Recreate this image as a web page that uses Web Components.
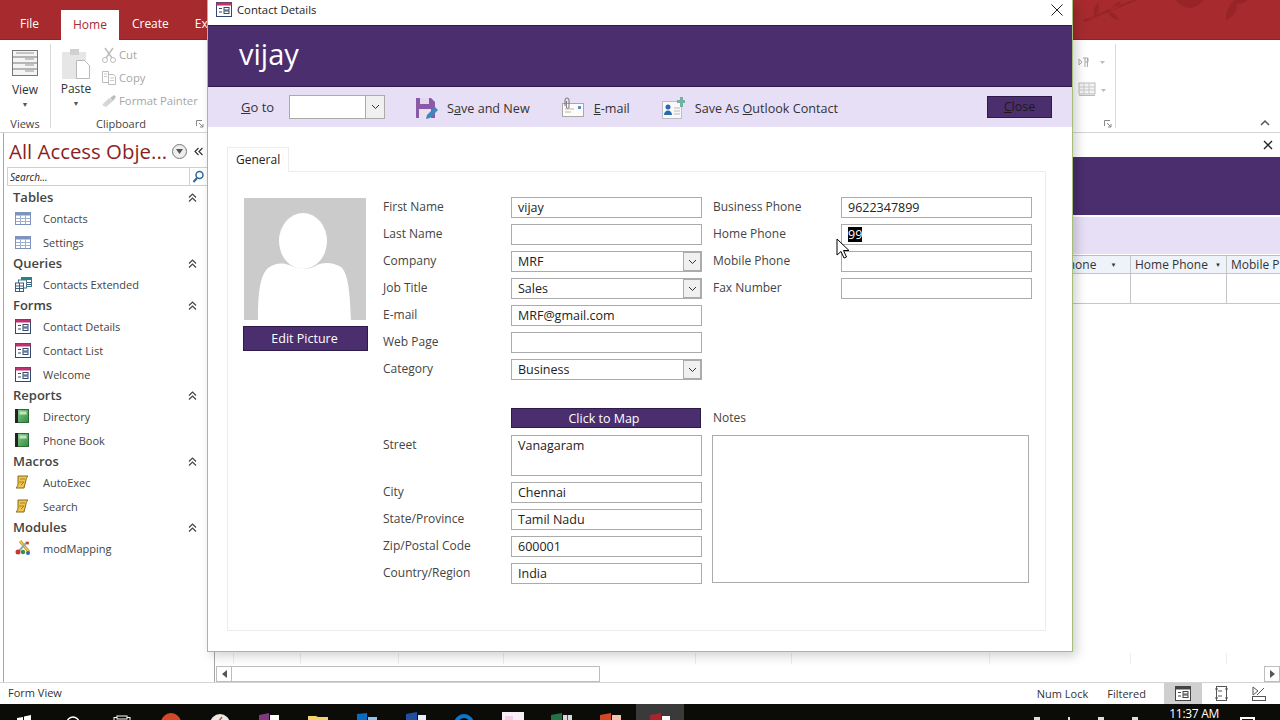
<!DOCTYPE html>
<html lang="en">
<head>
<meta charset="UTF-8">
<title>Contact Details</title>
<style>
  html, body { margin: 0; padding: 0; height: 720px; overflow: hidden; background: #fff; }
  body { font-family: 'Open Sans', 'Noto Sans', Arial, sans-serif; font-size: 12px; color: #333; }
</style>
</head>
<body>
<access-app></access-app>

<script>
// shared icon sprites, each element pulls what it needs
const ICONS = {
  form: '<svg width="16" height="15" viewBox="0 0 16 15"><rect x=".5" y=".5" width="15" height="14" fill="#fff" stroke="#2f4a6e"/><rect x=".5" y=".5" width="15" height="3" fill="#c2306e"/><path d="M3 6.500h3M3 10h3" stroke="#2f4a6e"/><rect x="8" y="5.500" width="5" height="2.500" fill="#fff" stroke="#2f4a6e"/><rect x="8" y="9" width="5" height="2.500" fill="#fff" stroke="#2f4a6e"/></svg>',
  table: '<svg width="16" height="13" viewBox="0 0 16 13"><rect x=".5" y=".5" width="15" height="12" fill="#fff" stroke="#7d93bd"/><rect x=".5" y=".5" width="15" height="3" fill="#7d93bd"/><path d="M1 6.500h14M1 9.500h14M5.500 3v9M10.500 3v9" stroke="#9db0d2"/></svg>',
  query: '<svg width="17" height="15" viewBox="0 0 17 15"><rect x="6.500" y=".5" width="10" height="9" fill="#fff" stroke="#2f7f86"/><rect x="6.500" y=".5" width="10" height="2.500" fill="#2f7f86"/><rect x="3.500" y="3" width="8" height="8" fill="#fff" stroke="#49708c"/><rect x=".5" y="6" width="8" height="8.500" fill="#fff" stroke="#3b5d84"/><path d="M1 9h7M1 11.500h7M4.500 6v8M12 5.500h4M12 7.500h4" stroke="#3b5d84"/></svg>',
  report: '<svg width="14" height="14" viewBox="0 0 14 14"><defs><linearGradient id="r" x1="0" y1="0" x2="1" y2="1"><stop offset="0" stop-color="#8fd08f"/><stop offset="1" stop-color="#2e8b3e"/></linearGradient></defs><rect x="1.500" y=".5" width="12" height="13" fill="url(#r)" stroke="#2f6b36"/><rect x="0" y="0" width="3" height="14" fill="#222"/><rect x="4.500" y="2.500" width="7" height="3" fill="#bfe6bf"/></svg>',
  macro: '<svg width="14" height="14" viewBox="0 0 14 14"><path d="M3 1h10c-1 1-1.500 2-2 4L9 13H1c1-1 1.500-2 2-4z" fill="#eec44e" stroke="#8a6a1c"/><path d="M5 4h5M4 7h5l-3 3" stroke="#a88322" fill="none"/></svg>',
  module: '<svg width="17" height="16" viewBox="0 0 17 16"><path d="M5 1l9 11" stroke="#c9a227" stroke-width="3"/><path d="M5 1l9 11" stroke="#f3e08a"/><path d="M12 2l-8 9" stroke="#9aa7b8" stroke-width="2"/><circle cx="3" cy="12" r="2.500" fill="#c43b2e"/><circle cx="8" cy="12" r="2.200" fill="#3c8f3e"/><circle cx="13" cy="13" r="2" fill="#3566b0"/><circle cx="12.500" cy="3" r="1.500" fill="#c43b2e"/></svg>',
  caret: '<svg width="9" height="6" viewBox="0 0 9 6"><path d="M1 1l3.500 3.500L8 1" fill="none" stroke="#333"/></svg>',
  chevrons: '<svg width="9" height="9" viewBox="0 0 9 9"><path d="M1 4.500L4.500 1 8 4.500M1 8.500L4.500 5 8 8.500" fill="none" stroke="#444" stroke-width="1.200"/></svg>'
};

class NavGroup extends HTMLElement {
  constructor() {
    super();
    this.attachShadow({mode: 'open'}).innerHTML = `
      <style>
        :host { display: block; }
        .head { display: flex; justify-content: space-between; align-items: center; height: 18px; padding: 0 13px 0 9px; font-size: 13px; font-weight: 600; color: #444; }
      </style>
      <div class="head"><span>${this.getAttribute('label')}</span>${ICONS.chevrons}</div>
      <slot></slot>`;
  }
}
customElements.define('nav-group', NavGroup);

class NavItem extends HTMLElement {
  constructor() {
    super();
    this.attachShadow({mode: 'open'}).innerHTML = `
      <style>
        :host { display: flex; align-items: center; height: 24px; font-size: 11px; color: #444; }
        .ic { width: 39px; padding-left: 11px; box-sizing: border-box; display: flex; align-items: center; }
      </style>
      <span class="ic">${ICONS[this.getAttribute('icon')]}</span><slot></slot>`;
  }
}
customElements.define('nav-item', NavItem);

class NavPane extends HTMLElement {
  constructor() {
    super();
    this.attachShadow({mode: 'open'}).innerHTML = `
      <style>
        :host { display: flex; flex-direction: column; width: 207px; margin-left: 3px; border-left: 1px solid #a6a6a6; box-sizing: border-box; background: #fff; }
        .title { display: flex; align-items: center; height: 34px; padding: 2px 7px 0 5px; box-sizing: border-box; }
        .title span { flex: 1; font-size: 20.400px; color: #8a1f24; white-space: nowrap; }
        .circle { width: 13px; height: 13px; border: 1px solid #777; border-radius: 50%; background: #eee; display: flex; align-items: center; justify-content: center; margin-right: 7px; }
        .search { display: flex; align-items: center; height: 17px; margin: 0 3px 0 3px; border: 1px solid #d0d0d0; border-width: 1px 0 1px 1px; font-size: 10px; font-style: italic; color: #222; padding-left: 2px; }
        .search span { flex: 1; }
        .lens { width: 17px; border-left: 1px solid #d0d0d0; height: 100%; display: flex; align-items: center; justify-content: center; }
        .list { padding-top: 2px; }
      </style>
      <div class="title"><span>All Access Obje...</span>
        <div class="circle"><svg width="7" height="5" viewBox="0 0 7 5"><path d="M0 0h7L3.500 5z" fill="#555"/></svg></div>
        <svg width="9" height="9" viewBox="0 0 9 9"><path d="M4.500 1L1 4.500 4.500 8M8.500 1L5 4.500 8.500 8" fill="none" stroke="#333" stroke-width="1.200"/></svg>
      </div>
      <div class="search"><span>Search...</span><div class="lens"><svg width="13" height="13" viewBox="0 0 13 13"><circle cx="7.500" cy="5" r="3.500" fill="none" stroke="#2c6a9e" stroke-width="1.500"/><path d="M5 8l-3.500 4" stroke="#2c6a9e" stroke-width="2"/></svg></div></div>
      <div class="list"><slot></slot></div>`;
  }
}
customElements.define('nav-pane', NavPane);

class RibbonBar extends HTMLElement {
  constructor() {
    super();
    this.attachShadow({mode: 'open'}).innerHTML = `
      <style>
        :host { display: block; height: 133px; box-sizing: border-box; border-bottom: 1px solid #d4d4d4; background: #fff; }
        .tabs { position: relative; display: flex; align-items: flex-end; height: 40px; background: #a72b2e; border-bottom: 1px solid #8e2427; box-sizing: border-box; padding-left: 10px; color: #fff; font-size: 12px; }
        .tab { height: 30px; line-height: 30px; padding: 0 10px; margin-right: 4px; white-space: nowrap; }
        .tab.on { background: #fff; color: #a72b2e; padding: 0 12px; margin: 0 3px 0 8px; margin-bottom: -1px; }
        .tab.cut { width: 14px; padding-right: 0; overflow: hidden; margin-left: 2px; }
        .leaves { position: absolute; right: 0; top: 0; }
        .body { display: flex; height: 92px; color: #444; font-size: 12px; }
        .grp { position: relative; display: flex; flex-direction: column; box-sizing: border-box; border-right: 1px solid #d9d9d9; height: 84px; margin-top: 4px; }
        .cap { position: absolute; bottom: -3px; left: 0; right: 0; text-align: center; font-size: 11px; color: #444; }
        .big { display: flex; flex-direction: column; align-items: center; font-size: 12px; color: #333; }
        .drop { font-size: 7px; color: #555; line-height: 10px; margin-top: 2px; }
        .small { display: flex; align-items: center; gap: 2px; height: 23px; color: #a6a6a6; font-size: 11.300px; white-space: nowrap; }
        .launcher { position: absolute; right: 3px; bottom: 0; }
      </style>
      <div class="tabs">
        <div class="tab">File</div><div class="tab on">Home</div><div class="tab">Create</div><div class="tab cut">External Data</div>
        <svg class="leaves" width="206" height="36" viewBox="0 0 206 36" fill="#962327">
          <path d="M11 22C24 16 44 8 64 0H60C42 5 24 14 10 21zM20 17c-1-5 0-10 4-14 2 5 1 10-4 14zM36 10c2-4 6-7 11-9-1 5-5 8-11 9zM34 12c5 0 9 3 11 8-5 0-9-3-11-8zM18 18c-4-1-7 0-9 3 4 1 7 0 9-3z" opacity=".9"/>
          <path d="M101 0c3 4 8 7 15 8 4 0 9-2 13-8z" opacity=".85"/>
          <path d="M152 20c-1-7 3-15 8-20h14c-2 2-6 4-11 4 1 6-4 14-11 16z" opacity=".85"/>
        </svg>
      </div>
      <div class="body">
        <div class="grp" style="width:51px">
          <div class="big" style="padding-top:4px">
            <svg width="30" height="30" viewBox="0 0 30 30"><rect x="2.500" y="2.500" width="25" height="25" fill="#f4f4f4" stroke="#777"/><path d="M3 9h24M3 15h24M3 21h24" stroke="#777"/><path d="M15 11h9M15 17h9M6 5h18M15 23h9" stroke="#c5c5c5" stroke-width="2"/></svg>
            <span style="margin-top:3px">View</span><span class="drop">&#9660;</span>
          </div>
          <div class="cap">Views</div>
        </div>
        <div class="grp" style="width:157px">
          <div style="display:flex">
            <div class="big" style="width:50px;padding-top:4px">
              <svg width="30" height="32" viewBox="0 0 30 32"><rect x="1" y="4" width="24" height="27" fill="#e6e6e6"/><rect x="9" y="1" width="9" height="6" fill="#d0d0d0"/><path d="M15.500 12.500h8l5 5v13h-13z" fill="#fff" stroke="#b9b9b9"/></svg>
              <span>Paste</span><span class="drop">&#9660;</span>
            </div>
            <div style="margin-top:-1px">
              <div class="small"><svg width="16" height="16" viewBox="0 0 16 16"><path d="M4 1l7 10M12 1L5 11" stroke="#bdbdbd" stroke-width="1.500"/><circle cx="4" cy="13" r="2.500" fill="none" stroke="#bdbdbd"/><circle cx="12" cy="13" r="2.500" fill="none" stroke="#bdbdbd"/></svg>Cut</div>
              <div class="small"><svg width="16" height="15" viewBox="0 0 16 15"><path d="M1.500 1.500h6v11h-6zM7.500 4.500h5l2 2v8h-7z" fill="#fff" stroke="#bdbdbd"/><path d="M3 4h3M3 6.500h3M9 8h4M9 10.500h4" stroke="#ccc"/></svg>Copy</div>
              <div class="small"><svg width="16" height="15" viewBox="0 0 16 15"><path d="M1 12l7-7 4 3-7 6z" fill="#d6d6d6"/><path d="M9 5l4-3 2 2-3 4z" fill="#bdbdbd"/></svg>Format Painter</div>
            </div>
          </div>
          <div class="cap" style="padding-right:16px">Clipboard</div>
          <svg class="launcher" width="8" height="8" viewBox="0 0 8 8"><path d="M.5 6V.5H6M3 3l4 4M7 4v3H4" fill="none" stroke="#888"/></svg>
        </div>
        <div style="margin-left:867px;display:flex;position:relative;width:40px;border-right:1px solid #d9d9d9;height:84px;margin-top:4px;flex:none">
          <svg style="position:absolute;left:3px;top:12px" width="30" height="40" viewBox="0 0 30 40"><path d="M1 3l3 3-3 3zM7 2v9M9.500 2v9M5 2h5v4H7" fill="none" stroke="#a8a8a8"/><path d="M22 5h5l-2.500 3z" fill="#bbb"/><rect x="1" y="27" width="16" height="11" fill="#f4f4f4" stroke="#bbb"/><path d="M1 31h16M1 34h16M6 27v11M11 27v11" stroke="#c8c8c8"/><rect x="1" y="39" width="16" height="1" fill="#bbb"/><path d="M23 33h5l-2.500 3z" fill="#bbb"/></svg>
          <svg class="launcher" style="right:3px;bottom:0" width="8" height="8" viewBox="0 0 8 8"><path d="M.5 6V.5H6M3 3l4 4M7 4v3H4" fill="none" stroke="#888"/></svg>
        </div>
        <svg style="margin-left:auto;margin-right:10px;margin-top:79px" width="10" height="7" viewBox="0 0 10 7"><path d="M1 6l4-4 4 4" fill="none" stroke="#555" stroke-width="1.500"/></svg>
      </div>`;
  }
}
customElements.define('ribbon-bar', RibbonBar);

// the datasheet that sits behind the popup form
class DocArea extends HTMLElement {
  constructor() {
    super();
    const empty = '<div></div>'.repeat(10);
    this.attachShadow({mode: 'open'}).innerHTML = `
      <style>
        :host { position: relative; display: flex; flex-direction: column; flex: 1; min-width: 0; background: #fff; overflow: hidden; }
        .top { display: flex; justify-content: flex-end; align-items: center; height: 24px; padding-right: 7px; }
        .band { height: 58px; background: #4b2e6e; }
        .sub { height: 37px; margin-top: 2px; background: #e7dff6; }
        .cols { display: grid; grid-template-columns: 19px 67px 98px 105px 192px 96px 198px 141px 96px 60px; font-size: 12px; color: #333; }
        .cols div { box-sizing: border-box; border-right: 1px solid #c6c6c6; }
        .cols div:last-child { border-right: 0; }
        .hdr { height: 19px; margin-top: 1px; border-top: 1px solid #b5bfcf; border-bottom: 1px solid #c6c6c6; background: #eef3fa; box-sizing: border-box; }
        .hdr div { height: 17px; white-space: nowrap; overflow: hidden; display: flex; align-items: center; padding-left: 4px; gap: 7px; }
        .hdr i { font-style: normal; font-size: 6px; color: #333; }
        .row { height: 30px; border-bottom: 1px solid #c6c6c6; box-sizing: border-box; }
        .stub { height: 11px; margin-top: 349px; }
        .stub div { border-color: #ededed; }
        .scroll { display: flex; height: 16px; margin-top: 2px; padding-left: 1px; }
        .sb { box-sizing: border-box; width: 16px; height: 16px; border: 1px solid #bdbdbd; display: flex; align-items: center; justify-content: center; background: #fff; }
        .track { box-sizing: border-box; width: 368px; height: 16px; border: 1px solid #bdbdbd; border-left: 0; }
      </style>
      <div class="top"><svg width="10" height="10" viewBox="0 0 10 10"><path d="M1 1l8 8M9 1L1 9" stroke="#222" stroke-width="1.400"/></svg></div>
      <div class="band"></div>
      <div class="sub"></div>
      <div class="cols hdr"><div></div><div></div><div></div><div></div><div></div><div></div><div></div><div style="padding-left:18px;gap:14px">Business Phone <i>&#9660;</i></div><div>Home Phone <i>&#9660;</i></div><div>Mobile Phone</div></div>
      <div class="cols row">${empty}</div>
      <div class="cols stub">${empty}</div>
      <div class="scroll">
        <div class="sb"><svg width="5" height="8" viewBox="0 0 5 8"><path d="M5 0v8L0 4z" fill="#555"/></svg></div>
        <div class="track"></div>
        <div class="sb" style="margin-left:auto"><svg width="5" height="8" viewBox="0 0 5 8"><path d="M0 0v8l5-4z" fill="#555"/></svg></div>
      </div>`;
  }
}
customElements.define('doc-area', DocArea);

class FormField extends HTMLElement {
  constructor() {
    super();
    const tall = this.hasAttribute('tall');
    this.attachShadow({mode: 'open'}).innerHTML = `
      <style>
        :host { display: flex; position: relative; box-sizing: border-box; height: ${tall ? 41 : 21}px; border: 1px solid #ababab; background: #fff; font-size: 12.500px; color: #222; }
        .v { flex: 1; padding: ${tall ? 1 : 0}px 0 0 6px; line-height: ${tall ? 17 : 20}px; white-space: nowrap; }
        .btn { box-sizing: border-box; width: 19px; height: 21px; margin: -1px -1px -1px 0; background: #f0f0f0; border: 2px solid #ababab; border-left-width: 1px; display: flex; align-items: center; justify-content: center; }
      </style>
      <div class="v"><slot></slot></div>
      ${this.hasAttribute('combo') ? `<div class="btn">${ICONS.caret}</div>` : ''}`;
  }
}
customElements.define('form-field', FormField);

class FormLabel extends HTMLElement {
  constructor() {
    super();
    this.attachShadow({mode: 'open'}).innerHTML = `
      <style>:host { display: block; font-size: 12px; color: #444; line-height: 20px; white-space: nowrap; }</style><slot></slot>`;
  }
}
customElements.define('form-label', FormLabel);

class PurpleButton extends HTMLElement {
  constructor() {
    super();
    this.attachShadow({mode: 'open'}).innerHTML = `
      <style>:host { display: flex; align-items: center; justify-content: center; box-sizing: border-box; background: #4b2e6e; border: 1px solid #2f1a4c; color: #fff; font-size: 12.500px; white-space: nowrap; }</style><slot></slot>`;
  }
}
customElements.define('purple-button', PurpleButton);

class ContactDialog extends HTMLElement {
  constructor() {
    super();
    this.attachShadow({mode: 'open'}).innerHTML = `
      <style>
        :host { position: absolute; left: 207px; top: 0; width: 866px; height: 652px; box-sizing: border-box; display: flex; flex-direction: column; background: #fff; border: 1px solid #a5bd7d; border-top: 0; box-shadow: 4px 4px 10px rgba(0,0,0,.18); }
        u { text-decoration: underline; text-underline-offset: 1px; }
        .cap { display: flex; align-items: center; height: 25px; box-sizing: border-box; padding: 0 9px 6px 8px; flex: none; gap: 5px; font-size: 11.300px; color: #222; }
        .cap span { flex: 1; }
        .hero { flex: none; box-sizing: border-box; height: 62px; background: #4b2e6e; border: solid #2f1a4c; border-width: 1px 0; color: #fff; font-size: 29px; line-height: 56px; padding-left: 31px; }
        .tools { flex: none; display: flex; align-items: center; height: 40px; background: #e7dff6; font-size: 12.600px; color: #333; padding-left: 33px; }
        .goto { font-size: 13px; }
        .combo { display: flex; width: 96px; height: 24px; box-sizing: border-box; border: 1px solid #ababab; background: #fff; margin: 0 12px 0 15px; }
        .combo b { margin-left: auto; width: 18px; background: #f0f0f0; border-left: 1px solid #ababab; display: flex; align-items: center; justify-content: center; }
        .tool { display: flex; align-items: center; white-space: nowrap; padding-top: 2px; }
        .close { margin-left: auto; margin-right: 20px; margin-top: -1px; width: 65px; height: 22px; color: #1b1b1b; }
        .page { flex: 1; padding: 20px 26px 20px 19px; display: flex; flex-direction: column; min-height: 0; }
        .tab { align-self: flex-start; box-sizing: border-box; height: 25px; line-height: 23px; padding: 0 8px; border: 1px solid #ececec; border-bottom: 0; font-size: 12px; color: #222; background: #fff; position: relative; z-index: 1; margin-bottom: -1px; }
        .panel { flex: 1; box-sizing: border-box; border: 1px solid #ececec; display: flex; padding: 25px 0 0 15px; }
        .photo { width: 125px; margin-right: 15px; flex: none; }
        .pic { display: block; margin: 1px 0 0 1px; }
        .edit { display: flex; height: 25px; margin-top: 6px; padding-right: 2px; }
        .upper { display: grid; grid-template-columns: 128px 191px 139px 191px; grid-auto-rows: 21px; row-gap: 6px; }
        .upper .r { margin-left: 11px; }
        .lower { display: grid; grid-template-columns: 128px 191px 328px; grid-template-rows: 21px 41px 21px 21px 21px 21px; row-gap: 6px; margin-top: 28px; }
        .map { height: 20px; margin-right: 1px; padding-right: 4px; }
        .notes { grid-column: 3; grid-row: 2 / 7; margin-left: 10px; border: 1px solid #ababab; height: 148px; width: 317px; box-sizing: border-box; }
        .sel { display: inline-block; background: #000; color: #fff; line-height: 15px; }
        .pointer { position: absolute; left: 628px; top: 238px; }
      </style>
      <div class="cap">${ICONS.form}<span>Contact Details</span>
        <svg width="12" height="12" viewBox="0 0 12 12"><path d="M.5.5l11 11M11.500.5l-11 11" stroke="#222"/></svg></div>
      <div class="hero">vijay</div>
      <div class="tools">
        <span class="goto"><u>G</u>o to</span>
        <div class="combo"><b>${ICONS.caret}</b></div>
        <div class="tool" style="margin-left:18px;gap:9px">
          <svg width="23" height="23" viewBox="0 0 23 23"><path d="M1 1h15l4 4v16H1z" fill="#8a5aa8"/><rect x="5" y="1" width="9" height="6" fill="#e4d8ee"/><rect x="4" y="12" width="12" height="9" fill="#e8e0ee"/><path d="M11 22l1-4 8-8 3 3-8 8z" fill="#3d87bf"/></svg>
          <span>S<u>a</u>ve and New</span></div>
        <div class="tool" style="margin-left:32px;gap:8px">
          <svg width="24" height="22" viewBox="0 0 24 22"><rect x=".5" y="6.500" width="21" height="13" fill="#fdfcf6" stroke="#a8a8a8"/><path d="M3 12h9M3 15h6" stroke="#b5b5b5"/><rect x="16" y="9" width="3" height="3" fill="#5b8cc8"/><path d="M3 9V3a2 2 0 014 0v7a1.300 1.300 0 01-2.600 0V4" fill="none" stroke="#777"/></svg>
          <span><u>E</u>-mail</span></div>
        <div class="tool" style="margin-left:32px;gap:10px">
          <svg width="23" height="23" viewBox="0 0 23 23"><rect x=".5" y="4.500" width="19" height="17" fill="#f8f8fb" stroke="#bcbcc8"/><circle cx="6" cy="10" r="2.500" fill="#2a6aa6"/><path d="M2 18c0-6 8-6 8 0z" fill="#2a6aa6"/><path d="M12 11h6M12 14h6M12 17h6" stroke="#bbb"/><path d="M15 3h3V0h3v3h2v3h-2v4h-3V6h-3z" fill="#74b0a0"/></svg>
          <span>Save As <u>O</u>utlook Contact</span></div>
        <purple-button class="close"><span><u>C</u>lose</span></purple-button>
      </div>
      <div class="page">
        <div class="tab">General</div>
        <div class="panel">
          <div class="photo">
            <svg class="pic" width="122" height="122" viewBox="0 0 122 122"><rect width="122" height="122" fill="#cbcbcb"/><ellipse cx="59" cy="43" rx="24" ry="28" fill="#fff"/><path d="M14 122c0-22 1-44 10-52 8-6 16-5 21-3 9 4 19 6 28 0 6-3 16-3 24 2 8 7 9 30 10 53z" fill="#fff"/></svg>
            <purple-button class="edit">Edit Picture</purple-button>
          </div>
          <div>
            <div class="upper">
              <form-label>First Name</form-label><form-field>vijay</form-field><form-label class="r">Business Phone</form-label><form-field>9622347899</form-field>
              <form-label>Last Name</form-label><form-field></form-field><form-label class="r">Home Phone</form-label><form-field><span class="sel">99</span></form-field>
              <form-label>Company</form-label><form-field combo>MRF</form-field><form-label class="r">Mobile Phone</form-label><form-field></form-field>
              <form-label>Job Title</form-label><form-field combo>Sales</form-field><form-label class="r">Fax Number</form-label><form-field></form-field>
              <form-label>E-mail</form-label><form-field>MRF@gmail.com</form-field><span></span><span></span>
              <form-label>Web Page</form-label><form-field></form-field><span></span><span></span>
              <form-label>Category</form-label><form-field combo>Business</form-field><span></span><span></span>
            </div>
            <div class="lower">
              <span></span><purple-button class="map">Click to Map</purple-button><form-label style="margin-left:11px">Notes</form-label>
              <form-label>Street</form-label><form-field tall>Vanagaram</form-field><div class="notes"></div>
              <form-label>City</form-label><form-field>Chennai</form-field>
              <form-label>State/Province</form-label><form-field>Tamil Nadu</form-field>
              <form-label>Zip/Postal Code</form-label><form-field>600001</form-field>
              <form-label>Country/Region</form-label><form-field>India</form-field>
            </div>
          </div>
        </div>
      </div>
      <svg class="pointer" width="14" height="21" viewBox="0 0 14 21"><path d="M1 1v16l4-3.500 3 6.500 2.500-1-3-6.500h5.500z" fill="#fff" stroke="#000"/></svg>`;
  }
}
customElements.define('contact-dialog', ContactDialog);

class StatusBar extends HTMLElement {
  constructor() {
    super();
    this.attachShadow({mode: 'open'}).innerHTML = `
      <style>
        :host { display: flex; align-items: center; height: 22px; box-sizing: border-box; border-top: 1px solid #d4d4d4; background: #fff; font-size: 11px; color: #333; padding-left: 8px; flex: none; }
        .txt { margin-right: 19px; }
        .v { width: 38px; height: 21px; display: flex; align-items: center; justify-content: center; }
        .v.on { background: #cfcfcf; }
      </style>
      <span style="flex:1;margin-top:-2px">Form View</span>
      <span class="txt">Num Lock</span><span class="txt" style="margin-right:18px">Filtered</span>
      <div class="v on">${ICONS.form.replace('#c2306e', '#444').replace(/#2f4a6e/g, '#444')}</div>
      <div class="v"><svg width="13" height="15" viewBox="0 0 13 15"><rect x="1.500" y=".5" width="10" height="14" fill="none" stroke="#555"/><path d="M3 5h4M3 10h4M0 3h3M10 3h3M0 12h3M10 12h3" stroke="#555"/></svg></div>
      <div class="v" style="margin-right:2px"><svg width="14" height="15" viewBox="0 0 14 15"><path d="M1 1l5 4-5 4zM5 9l7-7" fill="none" stroke="#555"/><rect x=".5" y="10.500" width="13" height="4" fill="none" stroke="#555"/></svg></div>`;
  }
}
customElements.define('status-bar', StatusBar);

class TaskBar extends HTMLElement {
  constructor() {
    super();
    // icons are cut off by the bottom of the window, only their top shows
    const glyphs = [
      '<path d="M5 14l6-1v3H5zM12 12.500l7-1.500v5h-7z" fill="#fff"/>',
      '<circle cx="12" cy="19" r="6" fill="none" stroke="#fff" stroke-width="1.500"/>',
      '<rect x="4" y="13.500" width="16" height="6" fill="none" stroke="#fff"/><rect x="7" y="12" width="10" height="3" fill="#0b0b08" stroke="#fff"/>',
      '<circle cx="12" cy="19" r="10" fill="#d4482a"/>',
      '<circle cx="12" cy="20" r="10" fill="#ece8e4"/><path d="M14 13l-3 4" stroke="#b54" stroke-width="1.500"/>',
      '<path d="M2 11l10-2v7H2z" fill="#80397b"/><rect x="13" y="11" width="9" height="5" fill="#fff"/>',
      '<path d="M2 12h8l2 1h10v3H2z" fill="#f0d36a"/>',
      '<path d="M2 10l10-1v7H2z" fill="#0a6cc0"/><rect x="13" y="13" width="9" height="3" fill="#8cc4ee"/>',
      '<path d="M2 10l11-2v8H2z" fill="#1f4f9e"/><rect x="14" y="11" width="8" height="5" fill="#e8eef8"/>',
      '<circle cx="12" cy="20" r="8" fill="none" stroke="#0a78d0" stroke-width="4"/>',
      '<rect x="1" y="8" width="22" height="8" fill="#f7eef6"/><rect x="4" y="12" width="8" height="4" fill="#f0cfe8"/>',
      '<path d="M1 11l11-2v7H1z" fill="#217346"/><rect x="13" y="11" width="9" height="5" fill="#fff" fill-opacity=".85"/><path d="M17.500 11v5" stroke="#217346"/>',
      '<path d="M1 11l11-2v7H1z" fill="#d24726"/><rect x="13" y="11" width="9" height="5" fill="#f3c3b4"/>',
      '<path d="M2 11l11-2v7H2z" fill="#a4262c"/><rect x="14" y="12" width="8" height="4" fill="#fff"/>'
    ];
    const icons = glyphs.map((g, i) => `<div class="t${i === 13 ? ' on' : ''}"><svg width="24" height="16" viewBox="0 0 24 16">${g}</svg></div>`).join('');
    this.attachShadow({mode: 'open'}).innerHTML = `
      <style>
        :host { display: flex; height: 16px; flex: none; background: #0b0b08; color: #fff; overflow: hidden; }
        .t { width: 48.900px; height: 16px; display: flex; justify-content: center; flex: none; }
        .t.on { background: #3a3a3a; }
        .clock { margin-left: auto; margin-right: 21px; font-size: 12px; line-height: 12px; letter-spacing: -.3px; padding-top: 4px; }
        .note { width: 15px; height: 12px; box-sizing: border-box; margin: 13px 25px 0 0; border: 2px solid #fff; }
        .tray { display: flex; gap: 28px; margin-left: 350px; padding-top: 13px; }
        .tray i { width: 6px; height: 3px; background: #ddd; display: block; }
      </style>
      ${icons}
      <div class="tray"><i></i><i style="width:2px"></i><i></i><i></i></div>
      <div class="clock">11:37 AM</div>
      <div class="note"></div>`;
  }
}
customElements.define('task-bar', TaskBar);

class AccessApp extends HTMLElement {
  constructor() {
    super();
    this.attachShadow({mode: 'open'}).innerHTML = `
      <style>
        :host { position: relative; display: flex; flex-direction: column; width: 1280px; height: 720px; overflow: hidden; }
        .main { display: flex; height: 549px; flex: none; }
        .split { width: 4px; flex: none; border-right: 1px solid #a6a6a6; background: #fff; }
      </style>
      <ribbon-bar></ribbon-bar>
      <div class="main">
        <nav-pane>
          <nav-group label="Tables"><nav-item icon="table">Contacts</nav-item><nav-item icon="table">Settings</nav-item></nav-group>
          <nav-group label="Queries"><nav-item icon="query">Contacts Extended</nav-item></nav-group>
          <nav-group label="Forms"><nav-item icon="form">Contact Details</nav-item><nav-item icon="form">Contact List</nav-item><nav-item icon="form">Welcome</nav-item></nav-group>
          <nav-group label="Reports"><nav-item icon="report">Directory</nav-item><nav-item icon="report">Phone Book</nav-item></nav-group>
          <nav-group label="Macros"><nav-item icon="macro">AutoExec</nav-item><nav-item icon="macro">Search</nav-item></nav-group>
          <nav-group label="Modules"><nav-item icon="module">modMapping</nav-item></nav-group>
        </nav-pane>
        <div class="split"></div>
        <doc-area></doc-area>
      </div>
      <status-bar></status-bar>
      <task-bar></task-bar>
      <contact-dialog></contact-dialog>`;
  }
}
customElements.define('access-app', AccessApp);
</script>
</body>
</html>
